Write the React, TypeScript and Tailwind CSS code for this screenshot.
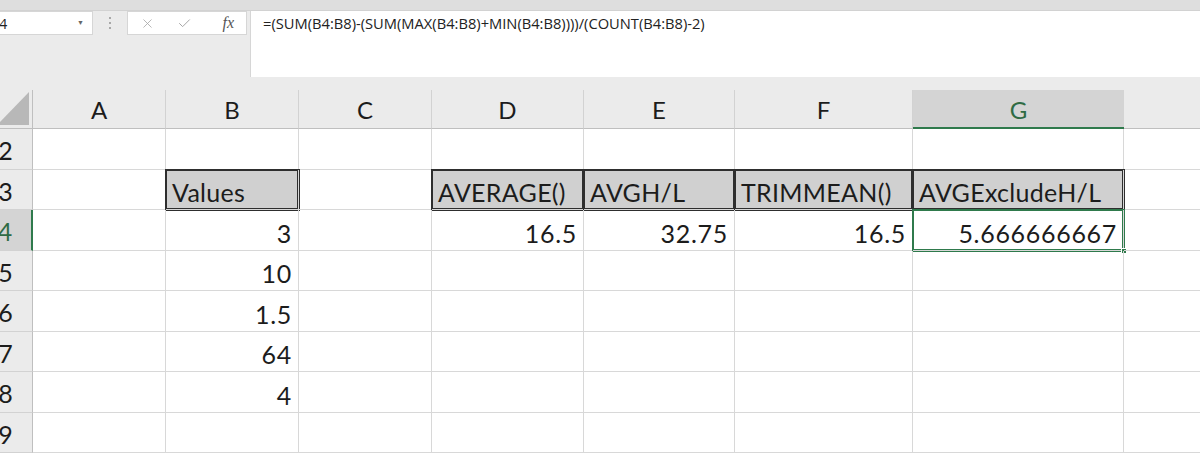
import { X, Check } from 'lucide-react'

type Cell = { text?: string; align?: 'left' | 'right'; head?: boolean; selected?: boolean }

// H is only partly in view, its letter sits past the right edge
const columns = [
  { key: 'A', label: 'A', width: 'w-[133px]' },
  { key: 'B', label: 'B', width: 'w-[133px]' },
  { key: 'C', label: 'C', width: 'w-[133px]' },
  { key: 'D', label: 'D', width: 'w-[152px]' },
  { key: 'E', label: 'E', width: 'w-[151px]' },
  { key: 'F', label: 'F', width: 'w-[178px]' },
  { key: 'G', label: 'G', width: 'w-[211px]' },
  { key: 'H', label: '', width: 'w-[200px]' },
]

const rows: { n: number; active?: boolean; cells: Record<string, Cell> }[] = [
  { n: 2, cells: {} },
  {
    n: 3,
    cells: {
      B: { text: 'Values', align: 'left', head: true },
      D: { text: 'AVERAGE()', align: 'left', head: true },
      E: { text: 'AVGH/L', align: 'left', head: true },
      F: { text: 'TRIMMEAN()', align: 'left', head: true },
      G: { text: 'AVGExcludeH/L', align: 'left', head: true },
    },
  },
  {
    n: 4,
    active: true,
    cells: {
      B: { text: '3' },
      D: { text: '16.5' },
      E: { text: '32.75' },
      F: { text: '16.5' },
      G: { text: '5.666666667', selected: true },
    },
  },
  { n: 5, cells: { B: { text: '10' } } },
  { n: 6, cells: { B: { text: '1.5' } } },
  { n: 7, cells: { B: { text: '64' } } },
  { n: 8, cells: { B: { text: '4' } } },
  { n: 9, cells: {} },
]

function SheetCell({ width, cell }: { width: string; cell?: Cell }) {
  let cls = `${width} shrink-0 h-full flex items-center pt-[6px] border-r border-b border-[#d8d8d8] relative`
  if (cell?.head) cls += ' bg-[#d0d0d0] shadow-[inset_0_0_0_1px_#2e2e2e,0_0_0_1px_#2e2e2e]'
  if (cell?.selected) cls += ' shadow-[inset_0_0_0_1px_#2f7a4c,0_0_0_1px_#2f7a4c]'
  const right = cell?.text && cell.align !== 'left'
  return (
    <div className={`${cls} ${right ? 'justify-end pr-[6px] tracking-[0.7px]' : 'pl-[6px] tracking-[0.3px]'}`}>
      <span className="leading-[26px] whitespace-nowrap">{cell?.text}</span>
      {cell?.selected && (
        <span className="absolute -right-[4px] -bottom-[4px] w-[6px] h-[6px] bg-[#2f7a4c] border border-white" />
      )}
    </div>
  )
}

export default function App() {
  return (
    <div className="w-[1200px] h-[455px] overflow-hidden bg-white flex flex-col font-['Lato',sans-serif] text-[#1c1c1c]">
      {/* ribbon edge */}
      <div className="h-[11px] shrink-0 bg-[#dedede] border-b border-[#d2d2d2]" />

      {/* formula bar */}
      <div className="h-[67px] shrink-0 bg-[#ebebeb] flex items-start font-['Open_Sans',sans-serif]">
        <div className="w-[93px] h-[24px] bg-white border border-l-0 border-[#d6d6d6] flex items-center overflow-hidden">
          <span className="-ml-[11px] text-[14px] text-[#222]">G4</span>
          <span className="ml-auto mr-[8px] text-[7px] text-[#666]">▼</span>
        </div>
        <div className="w-[34px] h-[24px] flex flex-col items-center justify-center gap-[3px]">
          <span className="w-[2px] h-[2px] bg-[#a8a8a8]" />
          <span className="w-[2px] h-[2px] bg-[#a8a8a8]" />
          <span className="w-[2px] h-[2px] bg-[#a8a8a8]" />
        </div>
        <div className="w-[120px] h-[24px] bg-white border border-[#d6d6d6] flex items-center">
          <X className="ml-[12px] w-[15px] h-[15px] text-[#a6a6a6]" strokeWidth={1.3} />
          <Check className="ml-[22px] w-[15px] h-[15px] text-[#a6a6a6]" strokeWidth={1.6} />
          <span className="ml-auto mr-[12px] font-['Liberation_Serif',serif] italic text-[16px] text-[#555]">
            fx
          </span>
        </div>
        <div className="ml-[3px] flex-1 h-[66px] bg-white border-l border-[#d6d6d6] pl-[12px] leading-[25px] text-[14.7px] text-[#222] whitespace-nowrap">
          =(SUM(B4:B8)-(SUM(MAX(B4:B8)+MIN(B4:B8))))/(COUNT(B4:B8)-2)
        </div>
      </div>

      {/* sheet */}
      <div className="-ml-[21px] flex flex-col">
        <div className="h-[51px] shrink-0 bg-[#ebebeb] flex items-end">
          <div className="w-[54px] h-[39px] shrink-0 flex items-end justify-end pr-[3px] pb-[3px] border-r border-b border-[#bfbfbf]">
            <svg width="32" height="33" viewBox="0 0 32 33">
              <polygon points="32,0 32,33 0,33" fill="#b8b8b8" />
            </svg>
          </div>
          {columns.map((c) =>
            c.key === 'G' ? (
              <div
                key={c.key}
                className={`${c.width} shrink-0 h-[39px] flex items-center justify-center pt-[2px] text-[24px] bg-[#d4d4d4] border-b-2 border-[#2f7a4c] text-[#2f6b44]`}
              >
                {c.label}
              </div>
            ) : (
              <div
                key={c.key}
                className={`${c.width} shrink-0 h-[39px] flex items-center justify-center pt-[2px] text-[24px] border-r border-b border-r-[#d2d2d2] border-b-[#bfbfbf]`}
              >
                {c.label}
              </div>
            )
          )}
        </div>

        {rows.map((r) => (
          <div key={r.n} className="h-[40.5px] shrink-0 flex text-[25px]">
            <div
              className={
                r.active
                  ? 'w-[54px] shrink-0 flex items-center justify-center pt-[4px] bg-[#d4d4d4] text-[#2f6b44] border-r-2 border-[#2f7a4c] border-b border-b-[#d2d2d2]'
                  : 'w-[54px] shrink-0 flex items-center justify-center pt-[4px] bg-[#ebebeb] border-r border-b border-r-[#bfbfbf] border-b-[#d2d2d2]'
              }
            >
              {r.n}
            </div>
            {columns.map((c) => (
              <SheetCell key={c.key} width={c.width} cell={r.cells[c.key]} />
            ))}
          </div>
        ))}
      </div>
    </div>
  )
}
